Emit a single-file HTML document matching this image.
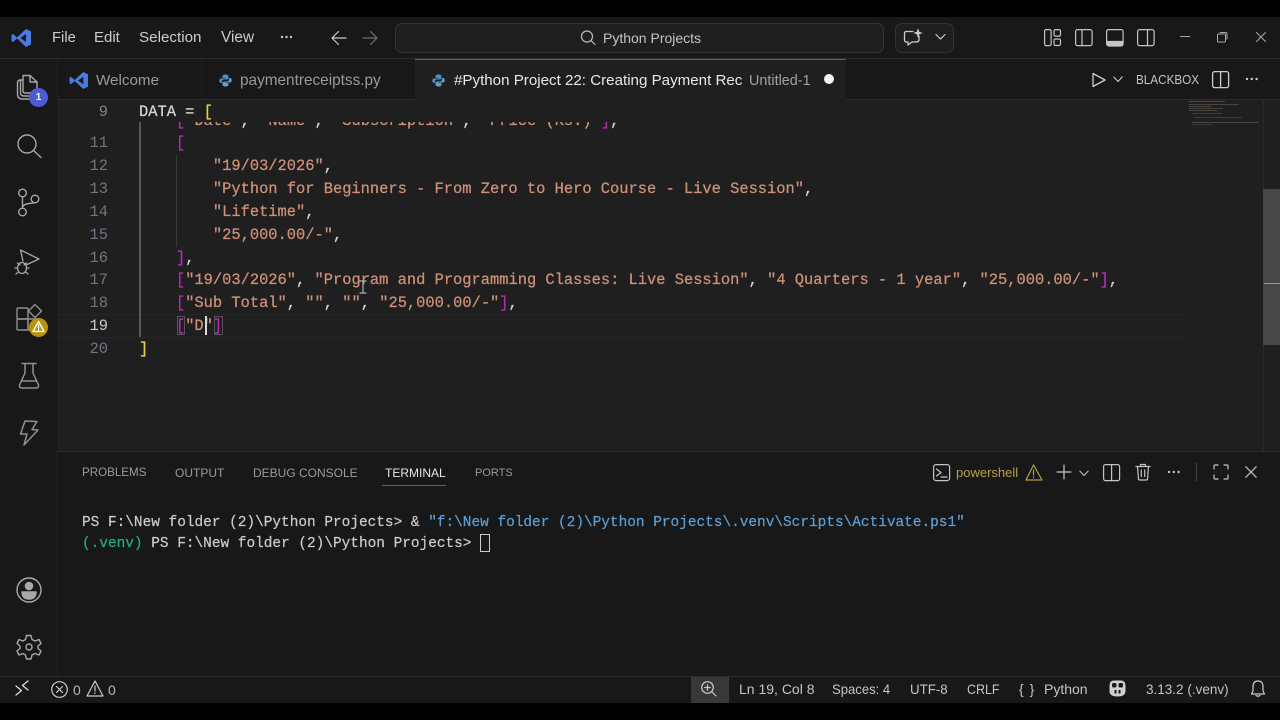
<!DOCTYPE html>
<html><head><meta charset="utf-8"><style>
html,body{margin:0;padding:0;width:1280px;height:720px;overflow:hidden;background:#000}
#a{position:absolute;left:0;top:0;width:1280px;height:720px;overflow:hidden;background:#000;font-family:"Liberation Sans",sans-serif}
.r{position:absolute}
.t{position:absolute;white-space:pre;line-height:20px;transform-origin:0 50%}
.c{position:absolute;left:139px;white-space:pre;font:15.4px/23px "Liberation Mono",monospace;color:#ce9178;height:23px;-webkit-text-stroke:.25px}
.n{position:absolute;width:50px;left:58px;text-align:right;font:15.4px/23px "Liberation Mono",monospace;color:#6e7681}
.m{color:#c9c9c9}.p{color:#b02cb8}.y{color:#e3d24b}
.o{color:#d4d4d4}
svg{position:absolute;overflow:visible;fill:none;stroke-linecap:round;stroke-linejoin:round}
</style></head><body><div id="a">
<!-- backgrounds -->
<div class="r" style="left:0;top:17px;width:1280px;height:41px;background:#181818"></div>
<div class="r" style="left:0;top:58px;width:1280px;height:1px;background:#2b2b2b"></div>
<div class="r" style="left:0;top:59px;width:57px;height:618px;background:#181818"></div>
<div class="r" style="left:57px;top:59px;width:1px;height:618px;background:#222"></div>
<div class="r" style="left:58px;top:59px;width:1222px;height:40px;background:#181818"></div>
<div class="r" style="left:58px;top:99px;width:1222px;height:1px;background:#2b2b2b"></div>
<div class="r" style="left:415px;top:59px;width:1px;height:40px;background:#202020"></div>
<div class="r" style="left:201px;top:59px;width:1px;height:40px;background:#202020"></div>
<div class="r" style="left:845px;top:59px;width:1px;height:40px;background:#252525"></div>
<div class="r" style="left:415px;top:59px;width:431px;height:41px;background:#1f1f1f"></div>
<div class="r" style="left:415px;top:59px;width:431px;height:1px;background:#5b54b8"></div>
<div class="r" style="left:58px;top:100px;width:1222px;height:351px;background:#1f1f1f"></div>
<div class="r" style="left:58px;top:451px;width:1222px;height:1px;background:#2b2b2b"></div>
<div class="r" style="left:58px;top:452px;width:1222px;height:225px;background:#181818"></div>
<div class="r" style="left:0;top:676px;width:1280px;height:1px;background:#2b2b2b"></div>
<div class="r" style="left:0;top:677px;width:1280px;height:26px;background:#181818"></div>

<!-- title bar -->
<svg style="left:11px;top:28px" width="21" height="20" viewBox="0 0 21 20"><path d="M15 1 L20 3.5 V16.5 L15 19 L6 10.5 L2 14 L.5 13 V7 L2 6 L6 9.5 Z M15 6 L9.5 10 L15 14 Z" fill="#4a7be0" fill-rule="evenodd"/></svg>
<div class="t" style="left:52px;top:28px;font-size:14.8px;color:#ccc">File</div>
<div class="t" style="left:94px;top:28px;font-size:15px;color:#ccc">Edit</div>
<div class="t" style="left:139px;top:28px;font-size:15.2px;color:#ccc">Selection</div>
<div class="t" style="left:221px;top:28px;font-size:15.4px;color:#ccc">View</div>
<svg style="left:280px;top:34px" width="14" height="6"><circle cx="2" cy="3" r="1.2" fill="#ccc"/><circle cx="6.500" cy="3" r="1.2" fill="#ccc"/><circle cx="11" cy="3" r="1.2" fill="#ccc"/></svg>
<svg style="left:331px;top:30px" width="16" height="16" stroke="#ccc" stroke-width="1.2"><path d="M1 8H15M7.500 1.500 1 8l6.500 6.500"/></svg>
<svg style="left:362px;top:30px" width="16" height="16" stroke="#6f6f6f" stroke-width="1.2"><path d="M1 8H15M8.500 1.500 15 8l-6.500 6.500"/></svg>
<div class="r" style="left:395px;top:23px;width:487px;height:28px;border:1px solid #333;border-radius:7px;background:#1f1f1f"></div>
<svg style="left:580px;top:30px" width="16" height="16" stroke="#bbb" stroke-width="1.2"><circle cx="7" cy="6.500" r="5.500"/><path d="M11 10.500 15 14.500"/></svg>
<div class="t" style="left:603px;top:28px;font-size:14px;color:#c4c4c4">Python Projects</div>
<div class="r" style="left:895px;top:23px;width:57px;height:28px;border:1px solid #333;border-radius:7px;background:#1f1f1f"></div>
<svg style="left:903px;top:28px" width="20" height="20" stroke="#ccc" stroke-width="1.3"><path d="M10 3.500H3.500Q1.500 3.500 1.500 5.500V12Q1.500 14 3.500 14H5V17L9 14H13Q16 14 16 12V8"/><path d="M15 1 16 4 19 5 16 6 15 9 14 6 11 5 14 4Z" fill="#ccc" stroke-width=".6"/></svg>
<svg style="left:935px;top:33px" width="11" height="8" stroke="#ccc" stroke-width="1.2"><path d="M1 1.500 5.500 6 10 1.500"/></svg>
<svg style="left:1044px;top:29px" width="18" height="18" stroke="#c4c4c4" stroke-width="1.2"><rect x=".6" y=".6" width="6.500" height="16" rx="1.500"/><rect x="10" y=".6" width="6.500" height="6.500" rx="1.500"/><rect x="10" y="10" width="6.500" height="6.500" rx="1.500"/></svg>
<svg style="left:1075px;top:29px" width="18" height="18" stroke="#c4c4c4" stroke-width="1.2"><rect x=".6" y=".6" width="16.500" height="16" rx="2"/><path d="M7 .6V16.600"/></svg>
<svg style="left:1106px;top:29px" width="18" height="18" stroke="#c4c4c4" stroke-width="1.2"><rect x=".6" y=".6" width="16.500" height="16" rx="2"/><path d="M1 12.500H17V15Q17 17 15 17H3Q1 17 1 15Z" fill="#c4c4c4"/></svg>
<svg style="left:1137px;top:29px" width="18" height="18" stroke="#c4c4c4" stroke-width="1.2"><rect x=".6" y=".6" width="16.500" height="16" rx="2"/><path d="M10.500 .6V16.600"/></svg>
<div class="r" style="left:1180px;top:36px;width:10px;height:1px;background:#aaa"></div>
<svg style="left:1217px;top:32px" width="11" height="11" stroke="#aaa" stroke-width="1"><rect x=".5" y="2" width="8" height="8" rx="1"/><path d="M3 .5H8.500Q10 .5 10 2V7"/></svg>
<svg style="left:1256px;top:32px" width="10" height="10" stroke="#aaa" stroke-width="1"><path d="M.5 .5 9.500 9.500M9.500 .5 .5 9.500"/></svg>

<!-- activity bar -->
<svg style="left:16px;top:73px" width="26" height="30" stroke="#a8a8a8" stroke-width="1.400"><path d="M7 2.500H14L21 9V20H9Q7 20 7 18Z"/><path d="M14 2.500V9H21"/><path d="M7 7H4.500Q1.500 7 1.500 10V21Q1.500 26 6 26H13.500"/><path d="M4.500 7V20Q4.500 23 8 23H14"/></svg>
<div class="r" style="left:29px;top:88px;width:19px;height:19px;border-radius:50%;background:#4a5bd4;color:#fff;font:bold 10px/19px 'Liberation Sans',sans-serif;text-align:center">1</div>
<svg style="left:16px;top:133px" width="26" height="26" stroke="#a8a8a8" stroke-width="1.400"><circle cx="11" cy="11" r="9"/><path d="M17.500 17.500 25 24.500"/></svg>
<svg style="left:17px;top:187px" width="24" height="30" stroke="#a8a8a8" stroke-width="1.400"><circle cx="5.500" cy="6" r="3.800"/><circle cx="5.500" cy="25" r="3.800"/><circle cx="18" cy="12" r="3.800"/><path d="M5.500 10V21M5.500 20Q7 17 12 16.500Q16 16 17 15.800"/></svg>
<svg style="left:14px;top:248px" width="28" height="30" stroke="#a8a8a8" stroke-width="1.300"><path d="M9 13 6.500 2 25 11 12 17"/><ellipse cx="8" cy="20" rx="4.500" ry="5.500"/><path d="M3.500 15 6 17M12.500 15 10 17M1 20H3.500M15 20H12.500M2 26 4.500 24M14 26 11.500 24"/></svg>
<svg style="left:16px;top:304px" width="26" height="28" stroke="#8f8f8f" stroke-width="1.400"><rect x="1" y="4" width="11" height="11" rx="1"/><rect x="1" y="15" width="11" height="11" rx="1"/><rect x="12" y="15" width="11" height="11"/><path d="M19 .5 25.500 7 19 13.500 12.500 7Z"/></svg>
<div class="r" style="left:29px;top:318px;width:19px;height:19px;border-radius:50%;background:#b8930f"></div>
<svg style="left:32px;top:320px" width="13" height="13" stroke="#fff" stroke-width="1.300"><path d="M6.500 1.500 12 11.500H1Z"/><path d="M6.500 5V8.500M6.500 9.800V10.200"/></svg>
<svg style="left:18px;top:362px" width="22" height="28" stroke="#8f8f8f" stroke-width="1.500"><path d="M4 1.500H18M7 1.500V11L1.500 23Q1 26 4 26H18Q21 26 20.500 23L15 11V1.500M4 19H18"/></svg>
<svg style="left:19px;top:420px" width="20" height="26" stroke="#8f8f8f" stroke-width="1.500"><path d="M6 1 18 1.500 13 9.500 19 10 5 25 8 14H1.500Z"/></svg>
<svg style="left:16px;top:577px" width="26" height="26" stroke="#a8a8a8" stroke-width="1.400"><circle cx="13" cy="13" r="12"/><circle cx="13" cy="9" r="3.600" fill="#a8a8a8"/><path d="M6 15H20Q20 22 13 22Q6 22 6 15Z" fill="#a8a8a8"/></svg>
<svg style="left:16px;top:634px" width="26" height="26" stroke="#a8a8a8" stroke-width="1.400"><path d="M10.500 1.500H15L16 5.500 19 7 23 5.500 25 9.500 22 12V14.500L25 17 23 21 19 19.500 16 21 15 25H10.500L9.500 21 7 19.500 3 21 1 17 4 14.500V12L1 9.500 3 5.500 7 7 9.500 5.500Z"/><circle cx="13" cy="13" r="3"/></svg>

<!-- tabs -->
<svg style="left:69px;top:71px" width="20" height="19" viewBox="0 0 21 20"><path d="M15 1 L20 3.500 V16.500 L15 19 L6 10.500 L2 14 L.5 13 V7 L2 6 L6 9.500 Z M15 6 L9.500 10 L15 14 Z" fill="#4a7be0" fill-rule="evenodd"/></svg>
<div class="t" style="left:96px;top:71px;font-size:15.2px;color:#9a9a9a">Welcome</div>
<svg style="left:219px;top:74px" width="13" height="13" viewBox="0 0 13 13"><path d="M6.500 .5C4 .5 3.500 1.500 3.500 2.500V4H6.500V4.500H2C.8 4.500 .3 5.500 .3 6.800 .3 8 .8 9 2 9H3V7.500C3 6.300 4 5.500 5 5.500H8C8.800 5.500 9.500 4.800 9.500 4V2.500C9.500 1.300 8.500 .5 6.500 .5Z" fill="#4d8fc4"/><path d="M6.500 12.500C9 12.500 9.500 11.500 9.500 10.500V9H6.500V8.500H11C12.200 8.500 12.700 7.500 12.700 6.200 12.700 5 12.200 4 11 4H10V5.500C10 6.700 9 7.500 8 7.500H5C4.200 7.500 3.500 8.200 3.500 9V10.500C3.500 11.700 4.500 12.500 6.500 12.500Z" fill="#5f9fcf"/></svg>
<div class="t" style="left:240px;top:71px;font-size:15.35px;color:#9a9a9a">paymentreceiptss.py</div>
<svg style="left:432px;top:74px" width="13" height="13" viewBox="0 0 13 13"><path d="M6.500 .5C4 .5 3.500 1.500 3.500 2.500V4H6.500V4.500H2C.8 4.500 .3 5.500 .3 6.800 .3 8 .8 9 2 9H3V7.500C3 6.300 4 5.500 5 5.500H8C8.800 5.500 9.500 4.800 9.500 4V2.500C9.500 1.300 8.500 .5 6.500 .5Z" fill="#4d8fc4"/><path d="M6.500 12.500C9 12.500 9.500 11.500 9.500 10.500V9H6.500V8.500H11C12.200 8.500 12.700 7.500 12.700 6.200 12.700 5 12.200 4 11 4H10V5.500C10 6.700 9 7.500 8 7.500H5C4.200 7.500 3.500 8.200 3.500 9V10.500C3.500 11.700 4.500 12.500 6.500 12.500Z" fill="#5f9fcf"/></svg>
<div class="t" style="left:454px;top:71px;font-size:15.13px;color:#e8e8e8">#Python Project 22: Creating Payment Rec</div>
<div class="t" style="left:749px;top:71px;font-size:14.4px;color:#a0a0a0">Untitled-1</div>
<div class="r" style="left:824px;top:74px;width:10px;height:10px;border-radius:50%;background:#f4f4f4"></div>
<svg style="left:1092px;top:72px" width="14" height="16" stroke="#ccc" stroke-width="1.300"><path d="M1 1.500V14.500L13 8Z"/></svg>
<svg style="left:1113px;top:76px" width="10" height="7" stroke="#ccc" stroke-width="1.100"><path d="M.8 1 5 5.500 9.200 1"/></svg>
<div class="t" style="left:1136px;top:70px;font-size:13px;color:#c4c4c4;transform:scaleX(.9)">BLACKBOX</div>
<svg style="left:1212px;top:71px" width="18" height="18" stroke="#ccc" stroke-width="1.300"><rect x=".6" y=".6" width="16" height="16" rx="2"/><path d="M8.600 .6V16.600"/></svg>
<svg style="left:1245px;top:76px" width="14" height="6"><circle cx="2" cy="3" r="1.200" fill="#ccc"/><circle cx="6.800" cy="3" r="1.200" fill="#ccc"/><circle cx="11.600" cy="3" r="1.200" fill="#ccc"/></svg>

<!-- editor -->
<div class="r" style="left:58px;top:314px;width:1126px;height:1px;background:#262626"></div>
<div class="r" style="left:58px;top:337px;width:1126px;height:1px;background:#262626"></div>
<div class="n" style="top:132px">11</div>
<div class="n" style="top:155px">12</div>
<div class="n" style="top:178px">13</div>
<div class="n" style="top:201px">14</div>
<div class="n" style="top:224px">15</div>
<div class="n" style="top:247px">16</div>
<div class="n" style="top:269px">17</div>
<div class="n" style="top:292px">18</div>
<div class="n" style="top:315px;color:#ccc">19</div>
<div class="n" style="top:338px">20</div>
<div class="r" style="left:139px;top:122px;width:2px;height:215px;background:#585858"></div>
<div class="r" style="left:176px;top:155px;width:1px;height:92px;background:#3a3a3a"></div>
<div class="c" style="top:110px"><span style="color:transparent">    </span><span class="p">[</span>"Date"<span class="o">,</span> "Name"<span class="o">,</span> "Subscription"<span class="o">,</span> "Price (Rs.)"<span class="p">]</span><span class="o">,</span></div>
<div class="r" style="left:58px;top:100px;width:1120px;height:22px;background:#1f1f1f"></div>
<div class="n" style="top:100.500px;color:#858585">9</div>
<div class="c" style="top:100.500px;color:#d4d4d4">DATA = <span class="y">[</span></div>
<div class="c" style="top:132px"><span class="p">    [</span></div>
<div class="c" style="top:155px">        "19/03/2026"<span class="o">,</span></div>
<div class="c" style="top:178px">        "Python for Beginners - From Zero to Hero Course - Live Session"<span class="o">,</span></div>
<div class="c" style="top:201px">        "Lifetime"<span class="o">,</span></div>
<div class="c" style="top:224px">        "25,000.00/-"<span class="o">,</span></div>
<div class="c" style="top:247px"><span class="p">    ]</span><span class="o">,</span></div>
<div class="c" style="top:269px"><span class="p">    [</span>"19/03/2026"<span class="o">,</span> "Program and Programming Classes: Live Session"<span class="o">,</span> "4 Quarters - 1 year"<span class="o">,</span> "25,000.00/-"<span class="p">]</span><span class="o">,</span></div>
<div class="c" style="top:292px"><span class="p">    [</span>"Sub Total"<span class="o">,</span> ""<span class="o">,</span> ""<span class="o">,</span> "25,000.00/-"<span class="p">]</span><span class="o">,</span></div>
<div class="c" style="top:315px"><span class="p">    [</span>"D"<span class="p">]</span></div>
<div class="c" style="top:338px"><span class="y">]</span></div>
<div class="r" style="left:177px;top:316px;width:8px;height:19px;border:1px solid #555;box-sizing:border-box"></div>
<div class="r" style="left:214px;top:316px;width:9px;height:19px;border:1px solid #555;box-sizing:border-box"></div>
<div class="r" style="left:205px;top:316px;width:1.500px;height:19px;background:#d8d8d8"></div>
<svg style="left:359px;top:280px" width="8" height="15" stroke="#b0b0b0" stroke-width="1.200"><path d="M1 1H7M4 1V13M1 13H7"/></svg>

<!-- minimap & scrollbar -->
<div class="r" style="left:1263px;top:100px;width:1px;height:351px;background:#2a2a2a"></div>
<div class="r" style="left:1263px;top:189px;width:17px;height:156px;background:#474747"></div>
<div class="r" style="left:1264px;top:283px;width:16px;height:1px;background:#999"></div>
<div class="r" style="left:1189px;top:101px;width:36px;height:1px;background:#4a4a4a"></div>
<div class="r" style="left:1189px;top:104px;width:50px;height:1px;background:#444"></div>
<div class="r" style="left:1189px;top:106px;width:22px;height:1px;background:#4d4640"></div>
<div class="r" style="left:1189px;top:108px;width:34px;height:1px;background:#4a4138"></div>
<div class="r" style="left:1189px;top:110px;width:28px;height:1px;background:#444"></div>
<div class="r" style="left:1192px;top:113px;width:30px;height:1px;background:#3f3a36"></div>
<div class="r" style="left:1194px;top:117px;width:48px;height:1px;background:#3f3a36"></div>
<div class="r" style="left:1192px;top:122px;width:66px;height:1px;background:#4d4640"></div>
<div class="r" style="left:1192px;top:124px;width:20px;height:1px;background:#3f3a36"></div>

<!-- panel -->
<div class="t" style="left:82px;top:463px;font-size:11.6px;color:#9a9a9a">PROBLEMS</div>
<div class="t" style="left:175px;top:463px;font-size:12px;color:#9a9a9a">OUTPUT</div>
<div class="t" style="left:253px;top:463px;font-size:12px;color:#9a9a9a">DEBUG CONSOLE</div>
<div class="t" style="left:385px;top:463px;font-size:12px;color:#e6e6e6">TERMINAL</div>
<div class="t" style="left:475px;top:463px;font-size:11px;color:#9a9a9a">PORTS</div>
<div class="r" style="left:382px;top:485px;width:64px;height:1px;background:#5b54b8"></div>
<svg style="left:933px;top:464px" width="18" height="18" stroke="#c4c4c4" stroke-width="1.200"><rect x=".6" y=".6" width="16" height="16" rx="2.500"/><path d="M3.500 5 8 8.500 3.500 12M8 13H14"/></svg>
<div class="t" style="left:956px;top:463px;font-size:13px;color:#b5a045">powershell</div>
<svg style="left:1025px;top:464px" width="18" height="17" stroke="#b5a045" stroke-width="1.200"><path d="M8.500 1 17 16H1Z"/><path d="M8.500 6V11M8.500 13V13.500"/></svg>
<svg style="left:1056px;top:464px" width="16" height="16" stroke="#c4c4c4" stroke-width="1.200"><path d="M8 1V15M1 8H15"/></svg>
<svg style="left:1079px;top:470px" width="10" height="7" stroke="#c4c4c4" stroke-width="1"><path d="M.8 1 5 5.500 9.200 1"/></svg>
<svg style="left:1103px;top:464px" width="18" height="18" stroke="#c4c4c4" stroke-width="1.200"><rect x=".6" y=".6" width="16" height="16" rx="2"/><path d="M8.600 .6V16.600"/></svg>
<svg style="left:1135px;top:463px" width="16" height="18" stroke="#c4c4c4" stroke-width="1.200"><path d="M1 3.500H15M5.500 3.500V1.500H10.500V3.500M2.500 3.500 3.500 16Q3.500 17 5 17H11Q12.500 17 12.500 16L13.500 3.500M6.300 7V13.500M9.700 7V13.500"/></svg>
<svg style="left:1167px;top:469px" width="14" height="6"><circle cx="2" cy="3" r="1.200" fill="#c4c4c4"/><circle cx="6.800" cy="3" r="1.200" fill="#c4c4c4"/><circle cx="11.600" cy="3" r="1.200" fill="#c4c4c4"/></svg>
<div class="r" style="left:1196px;top:463px;width:1px;height:18px;background:#444"></div>
<svg style="left:1213px;top:464px" width="16" height="16" stroke="#c4c4c4" stroke-width="1.200"><path d="M1 5V2Q1 1 2 1H5M11 1H14Q15 1 15 2V5M15 11V14Q15 15 14 15H11M5 15H2Q1 15 1 14V11"/></svg>
<svg style="left:1245px;top:466px" width="12" height="12" stroke="#c4c4c4" stroke-width="1.200"><path d="M.8 .8 11.200 11.200M11.200 .8 .8 11.200"/></svg>
<div class="t" style="left:82px;top:513px;font:14.43px/21px 'Liberation Mono',monospace;color:#ccc;-webkit-text-stroke:.2px">PS F:\New folder (2)\Python Projects&gt; &amp; <span style="color:#5c9fd6">"f:\New folder (2)\Python Projects\.venv\Scripts\Activate.ps1"</span></div>
<div class="t" style="left:82px;top:534px;font:14.43px/21px 'Liberation Mono',monospace;color:#ccc;-webkit-text-stroke:.2px"><span style="color:#23b07a">(.venv)</span> PS F:\New folder (2)\Python Projects&gt;</div>
<div class="r" style="left:480px;top:534px;width:10px;height:18px;border:1px solid #ccc;box-sizing:border-box"></div>

<!-- status bar -->
<svg style="left:15px;top:680px" width="14" height="17" stroke="#ddd" stroke-width="1.300"><path d="M1 6 6.500 10.500 1 15M13 1 7.500 5.500 13 10"/></svg>
<svg style="left:51px;top:681px" width="18" height="17" stroke="#ccc" stroke-width="1.200"><circle cx="8.500" cy="8.500" r="7.800"/><path d="M5.500 5.500 11.500 11.500M11.500 5.500 5.500 11.500"/></svg>
<div class="t" style="left:73px;top:680px;font-size:14px;color:#b5b5b5">0</div>
<svg style="left:86px;top:680px" width="18" height="17" stroke="#ccc" stroke-width="1.200"><path d="M9 1 17 16H1Z"/><path d="M9 6V11M9 13V13.500"/></svg>
<div class="t" style="left:108px;top:680px;font-size:14px;color:#b5b5b5">0</div>
<div class="r" style="left:691px;top:677px;width:38px;height:26px;background:#383838"></div>
<svg style="left:701px;top:681px" width="16" height="16" stroke="#ccc" stroke-width="1.200"><circle cx="6.500" cy="6.500" r="5.800"/><path d="M3.800 6.500H9.200M6.500 3.800V9.200M11 11 15 15"/></svg>
<div class="t" style="left:739px;top:679px;font-size:14px;color:#c4c4c4">Ln 19, Col 8</div>
<div class="t" style="left:832px;top:679px;font-size:14px;color:#c4c4c4;transform:scaleX(.935)">Spaces: 4</div>
<div class="t" style="left:910px;top:679px;font-size:14px;color:#c4c4c4;transform:scaleX(.95)">UTF-8</div>
<div class="t" style="left:967px;top:679px;font-size:14px;color:#c4c4c4;transform:scaleX(.89)">CRLF</div>
<div class="t" style="left:1019px;top:679px;font-size:14px;letter-spacing:1px;color:#c4c4c4">{ }</div>
<div class="t" style="left:1044px;top:679px;font-size:14px;color:#c4c4c4">Python</div>
<svg style="left:1108px;top:680px" width="19" height="17"><path d="M1.500 11V6Q1.500 .5 6 .5H13Q17.500 .5 17.500 6V11Q17.500 16.500 9.500 16.500Q1.500 16.500 1.500 11Z" fill="#d0d0d0"/><rect x="4" y="3" width="4.500" height="4.500" rx="1.500" fill="#181818"/><rect x="10.500" y="3" width="4.500" height="4.500" rx="1.500" fill="#181818"/><rect x="6.500" y="10" width="2" height="3.500" fill="#181818"/><rect x="10.500" y="10" width="2" height="3.500" fill="#181818"/></svg>
<div class="t" style="left:1146px;top:679px;font-size:14px;color:#c4c4c4;transform:scaleX(.965)">3.13.2 (.venv)</div>
<svg style="left:1250px;top:680px" width="16" height="18" stroke="#ccc" stroke-width="1.200"><path d="M8 1Q3 1 3 7V11L1.500 14H14.500L13 11V7Q13 1 8 1ZM6 15.500Q8 17 10 15.500"/></svg>
</div></body></html>
